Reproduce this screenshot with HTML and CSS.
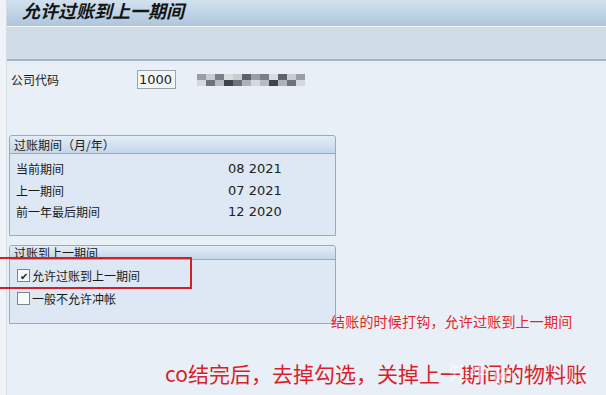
FILE: index.html
```html
<!DOCTYPE html>
<html lang="zh-CN">
<head>
    <meta charset="UTF-8">
    <title>允许过账到上一期间</title>
    <link rel="stylesheet" href="styles.css">
</head>
<body>
    <div class="screen">
        <div class="edge"></div>
        <div class="main">
            <div class="title-bar">
                <p class="title">允许过账到上一期间</p>
            </div>
            <div class="toolbar"></div>
            <div class="content">
                <div class="field-row">
                    <span class="label">公司代码</span>
                    <span class="input">1000</span>
                    <span class="blur">
                        <i class="px a"></i><i class="px b"></i><i class="px c"></i><i class="px d"></i><i class="px b"></i><i class="px e"></i><i class="px a"></i><i class="px c"></i><i class="px d"></i><i class="px e"></i><i class="px b"></i><i class="px a"></i>
                    </span>
                </div>

                <div class="group group-periods">
                    <div class="group-head">过账期间（月/年）</div>
                    <div class="group-body">
                        <div class="period-row"><span class="period-name">当前期间</span><span class="period-value">08 2021</span></div>
                        <div class="period-row"><span class="period-name">上一期间</span><span class="period-value">07 2021</span></div>
                        <div class="period-row"><span class="period-name">前一年最后期间</span><span class="period-value">12 2020</span></div>
                    </div>
                </div>

                <div class="group group-posting">
                    <div class="group-head">过账到上一期间</div>
                    <div class="group-body">
                        <label class="check-row"><span class="box checked">&#10004;</span>允许过账到上一期间</label>
                        <label class="check-row"><span class="box"></span>一般不允许冲帐</label>
                    </div>
                </div>
            </div>
        </div>

        <div class="mark-box"></div>
        <p class="note">结账的时候打钩，允许过账到上一期间</p>
        <p class="note-big">co结完后，去掉勾选，关掉上一期间的物料账</p>
        <p class="watermark">知乎 @</p>
    </div>
</body>
</html>
```

FILE: styles.css
```css
body {
    margin: 0;
    background-color: #e9eff6;
    font-family: "Noto Sans CJK SC", "Liberation Sans", sans-serif;
    font-size: 12px;
    color: #1a1a1a;
}
.screen {
    position: relative;
    display: flex;
    width: 606px;
    height: 395px;
    overflow: hidden;
}
.edge {
    width: 6px;
    background-color: #eff3f7;
    border-right: 1px solid #d3dbe3;
}
.main {
    flex: 1;
    display: flex;
    flex-direction: column;
}
.title-bar {
    height: 26px;
    background: linear-gradient(#d3e1ee, #adc5dc);
    border-bottom: 1px solid #f4f8fb;
}
.title {
    margin: 0;
    padding-left: 15px;
    font-size: 18px;
    line-height: 20px;
    font-weight: bold;
    font-style: italic;
    color: #151515;
}
.toolbar {
    height: 32px;
    background-color: #d0dde8;
    border-bottom: 2px solid #a8b5c2;
}
.content {
    padding: 9px 0 0 2px;
}
.field-row {
    display: flex;
    align-items: center;
    height: 19px;
}
.label {
    width: 126px;
    padding-left: 2px;
}
.input {
    width: 36px;
    height: 17px;
    border: 1px solid #98a4b0;
    background-color: #f3f5f7;
    font-family: "DejaVu Sans", sans-serif;
    font-size: 13px;
    line-height: 17px;
    padding-left: 1px;
    color: #222;
}
.blur {
    display: flex;
    margin-left: 21px;
    height: 12px;
}
.px {
    width: 9px;
    height: 12px;
}
.a { background: linear-gradient(#9a9ea4 50%, #d5d9de 50%); }
.b { background: linear-gradient(#c8cdd2 50%, #6e7379 50%); }
.c { background: linear-gradient(#7b8087 50%, #b7bcc2 50%); }
.d { background: linear-gradient(#d8dce1 50%, #3f444a 50%); }
.e { background: linear-gradient(#5d6268 50%, #aeb3b9 50%); }

.group {
    width: 325px;
    border: 1px solid #97aabf;
    border-radius: 3px 3px 0 0;
    background-color: #dde8f4;
}
.group-periods {
    margin-top: 46px;
    height: 99px;
}
.group-posting {
    margin-top: 9px;
    height: 77px;
}
.group-head {
    height: 17px;
    padding-left: 4px;
    line-height: 17px;
    background: linear-gradient(#e4edf7, #c4d6e9);
    border-bottom: 1px solid #97aabf;
    border-radius: 3px 3px 0 0;
}
.group-posting .group-head {
    height: 13px;
    line-height: 14px;
}
.group-body {
    padding: 4px 0 0 6px;
}
.period-row {
    display: flex;
    align-items: center;
    height: 21.5px;
}
.period-name {
    width: 212px;
}
.period-value {
    font-family: "DejaVu Sans", sans-serif;
    font-size: 13px;
    color: #222;
}
.group-posting .group-body {
    padding: 4px 0 0 7px;
}
.check-row {
    display: flex;
    align-items: center;
    height: 23px;
}
.box {
    width: 11px;
    height: 11px;
    margin-right: 2px;
    border: 1px solid #7a8593;
    background-color: #f7f9fb;
    font-size: 10px;
    line-height: 11px;
    text-align: center;
    color: #222;
}

.mark-box {
    position: absolute;
    left: -4px;
    top: 257px;
    width: 192px;
    height: 28px;
    border: 2px solid #d0202a;
}
.note {
    position: absolute;
    left: 331px;
    top: 312px;
    margin: 0;
    font-size: 14px;
    line-height: 18px;
    color: #e0262c;
    letter-spacing: 0.2px;
}
.note-big {
    position: absolute;
    left: 165px;
    top: 359px;
    margin: 0;
    font-size: 21px;
    line-height: 28px;
    color: #d81f2b;
}
.watermark {
    position: absolute;
    left: 449px;
    top: 359px;
    margin: 0;
    font-size: 20px;
    line-height: 28px;
    color: rgba(255, 255, 255, 0.6);
}
```
